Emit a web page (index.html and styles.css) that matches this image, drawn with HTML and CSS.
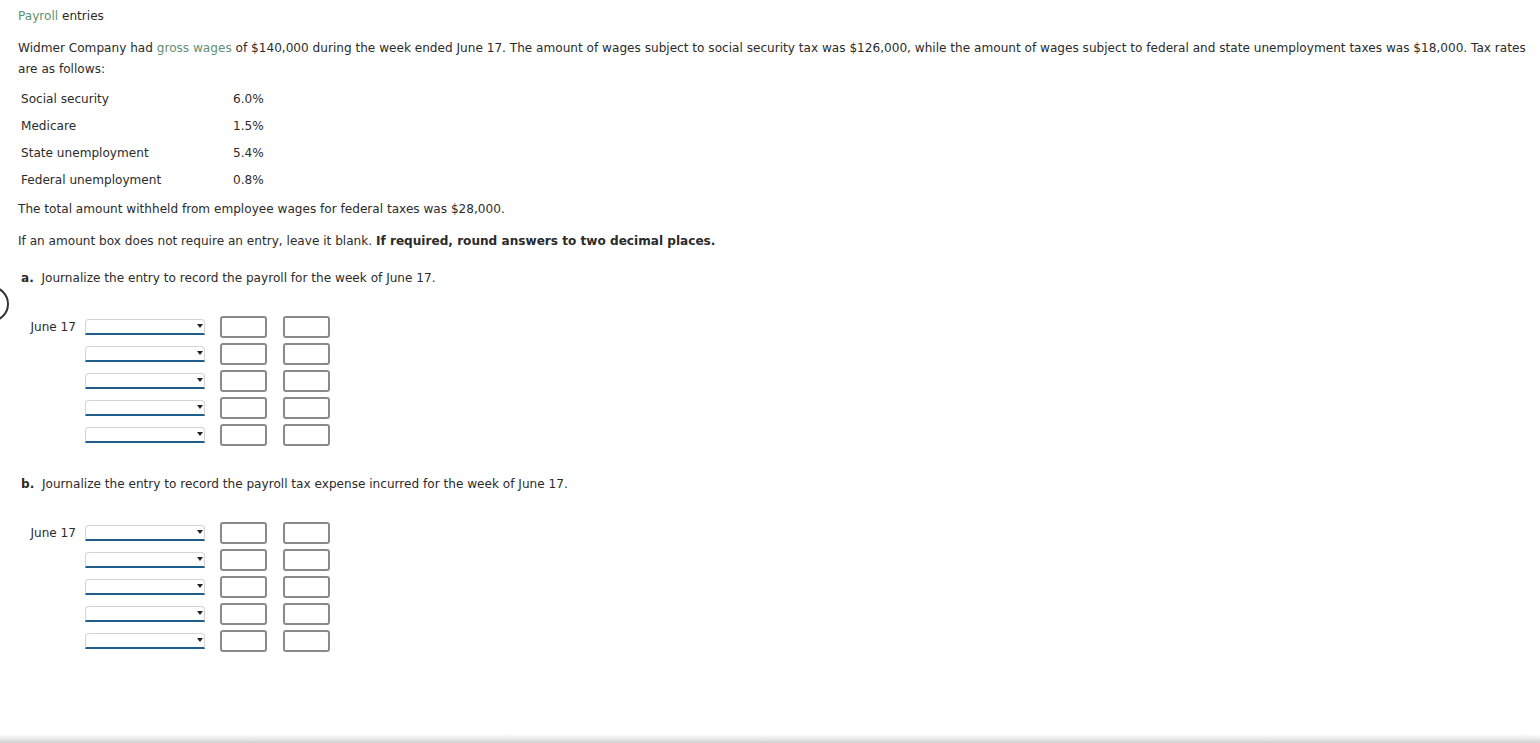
FILE: index.html
```html
<!DOCTYPE html>
<html>
<head>
<meta charset="utf-8">
<link rel="stylesheet" href="styles.css">
</head>
<body>
<div class="page">
  <p class="title"><span class="term">Payroll</span> entries</p>
  <p class="intro">Widmer Company had <span class="term">gross wages</span> of $140,000 during the week ended June 17. The amount of wages subject to social security tax was $126,000, while the amount of wages subject to federal and state unemployment taxes was $18,000. Tax rates are as follows:</p>
  <table class="rates">
    <tr><td class="rlabel">Social security</td><td>6.0%</td></tr>
    <tr><td class="rlabel">Medicare</td><td>1.5%</td></tr>
    <tr><td class="rlabel">State unemployment</td><td>5.4%</td></tr>
    <tr><td class="rlabel">Federal unemployment</td><td>0.8%</td></tr>
  </table>
  <p class="para withheld">The total amount withheld from employee wages for federal taxes was $28,000.</p>
  <p class="para note">If an amount box does not require an entry, leave it blank. <b>If required, round answers to two decimal places.</b></p>

  <p class="part part-a"><b>a.</b>&nbsp; Journalize the entry to record the payroll for the week of June 17.</p>
  <div class="journal ja">
    <div class="jrow"><span class="date">June 17</span><span class="sel"><i class="arrow"></i></span><span class="amt"></span><span class="amt"></span></div>
    <div class="jrow"><span class="date"></span><span class="sel"><i class="arrow"></i></span><span class="amt"></span><span class="amt"></span></div>
    <div class="jrow"><span class="date"></span><span class="sel"><i class="arrow"></i></span><span class="amt"></span><span class="amt"></span></div>
    <div class="jrow"><span class="date"></span><span class="sel"><i class="arrow"></i></span><span class="amt"></span><span class="amt"></span></div>
    <div class="jrow"><span class="date"></span><span class="sel"><i class="arrow"></i></span><span class="amt"></span><span class="amt"></span></div>
  </div>

  <p class="part part-b"><b>b.</b>&nbsp; Journalize the entry to record the payroll tax expense incurred for the week of June 17.</p>
  <div class="journal jb">
    <div class="jrow"><span class="date">June 17</span><span class="sel"><i class="arrow"></i></span><span class="amt"></span><span class="amt"></span></div>
    <div class="jrow"><span class="date"></span><span class="sel"><i class="arrow"></i></span><span class="amt"></span><span class="amt"></span></div>
    <div class="jrow"><span class="date"></span><span class="sel"><i class="arrow"></i></span><span class="amt"></span><span class="amt"></span></div>
    <div class="jrow"><span class="date"></span><span class="sel"><i class="arrow"></i></span><span class="amt"></span><span class="amt"></span></div>
    <div class="jrow"><span class="date"></span><span class="sel"><i class="arrow"></i></span><span class="amt"></span><span class="amt"></span></div>
  </div>
</div>
<div class="circle"></div>
<div class="bottom-shade"></div>
</body>
</html>
```

FILE: styles.css
```css
html, body {
  margin: 0;
  padding: 0;
  background: #fff;
}
body {
  font-family: "DejaVu Sans", Verdana, sans-serif;
  font-size: 12.1px;
  color: #2b2b2b;
  position: relative;
  min-height: 743px;
  overflow: hidden;
}
.page {
  padding: 8px 10px 0 18px;
}
p { margin: 0; }
.term { color: #5f9173; }
.title { line-height: 16px; }
.intro {
  margin-top: 14px;
  line-height: 21px;
}
.rates {
  border-collapse: collapse;
  margin-top: 6px;
  margin-left: 0;
}
.rates td {
  padding: 0 0 0 3px;
  height: 27px;
  line-height: 27px;
  vertical-align: middle;
}
.rates td.rlabel { width: 209px; }
.para { line-height: 21px; }
.withheld { margin-top: 5px; }
.note { margin-top: 11px; }
.part {
  line-height: 21px;
  padding-left: 3px;
}
.part-a { margin-top: 16px; }
.part-b { margin-top: 28px; }
.journal {
  display: flex;
  flex-direction: column;
  gap: 5px;
}
.ja { margin-top: 27px; }
.jb { margin-top: 27px; }
.jrow {
  display: flex;
  align-items: center;
  height: 22px;
}
.date {
  width: 58px;
  text-align: right;
  box-sizing: border-box;
}
.sel {
  position: relative;
  display: block;
  width: 120px;
  height: 16px;
  margin-left: 9px;
  box-sizing: border-box;
  border: 1px solid #d4d4d4;
  border-bottom: 2px solid #1f5e8c;
  border-radius: 4px 4px 0 0;
  background: #fff;
}
.arrow {
  position: absolute;
  right: 1px;
  top: 4px;
  width: 0;
  height: 0;
  border-left: 3.5px solid transparent;
  border-right: 3.5px solid transparent;
  border-top: 4px solid #222;
}
.amt {
  display: block;
  width: 47px;
  height: 22px;
  box-sizing: border-box;
  border: 2px solid #8a8a8a;
  border-radius: 3px;
  background: #fff;
  margin-left: 15px;
}
.amt + .amt { margin-left: 16px; }
.circle {
  position: absolute;
  left: -27px;
  top: 286px;
  width: 32px;
  height: 32px;
  border: 2.5px solid #333;
  border-radius: 50%;
}
.bottom-shade {
  position: absolute;
  left: 0;
  right: 0;
  bottom: 0;
  height: 9px;
  background: linear-gradient(to bottom, #ffffff, #ececec 50%, #cfcfcf);
}
```
